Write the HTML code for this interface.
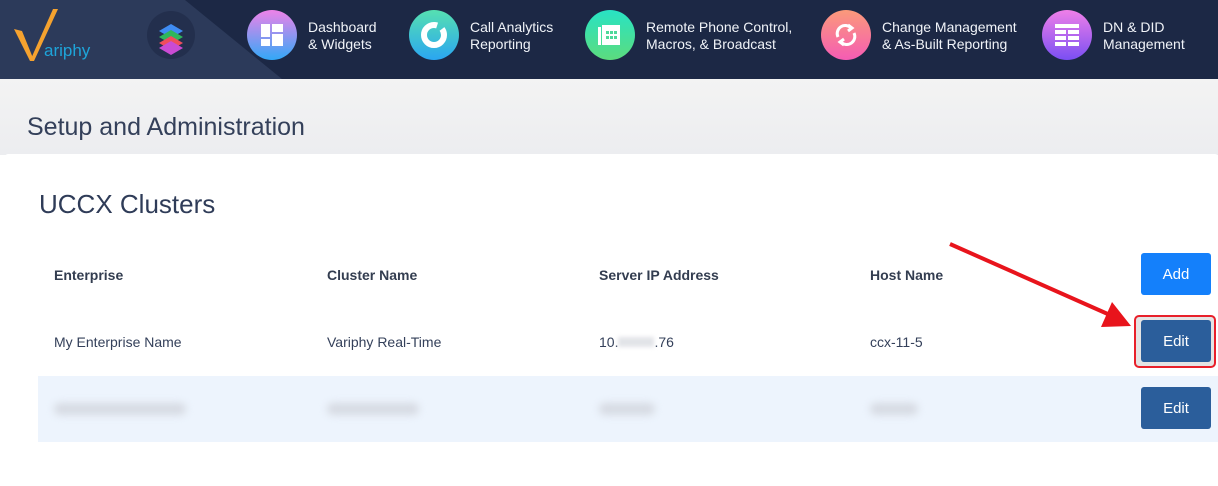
<!DOCTYPE html>
<html><head><style>
*{margin:0;padding:0;box-sizing:border-box}
body{width:1218px;height:486px;overflow:hidden;background:#fff;font-family:"Liberation Sans",sans-serif;position:relative}
.hdr{position:absolute;left:0;top:0;width:1218px;height:79px;background:#1c2845}
.nav{position:absolute;top:10px;display:flex;align-items:center;color:#f0f3f8;font-size:14px;line-height:17px}
.ic{width:50px;height:50px;border-radius:50%;margin-right:11px;display:flex;align-items:center;justify-content:center}
.gray{position:absolute;left:0;top:79px;width:1218px;height:76px;background:linear-gradient(#f3f3f3,#ecedf0)}
.card{position:absolute;left:5px;top:154px;width:1213px;height:332px;background:#fff;border-radius:3px}
.t{position:absolute;color:#34405a;font-size:14px}
.th{font-weight:bold;color:#333d50}
.btn{position:absolute;left:1141px;width:70px;height:42px;border-radius:3px;color:#fff;font-size:15px;display:flex;align-items:center;justify-content:center}
.blur{position:absolute;height:12px;background:#d6dae2;filter:blur(4px);border-radius:6px}
</style></head><body>
<div class="hdr">
<svg width="1218" height="79" style="position:absolute;left:0;top:0">
<polygon points="0,0 185,0 282,79 0,79" fill="#2c3a5a"/>
<polygon points="14,29 22,31 33,58 30,61" fill="#f5a22f"/><polygon points="30,61 53,9 58,9 34,61" fill="#f5a22f"/>
<text x="44" y="56" fill="#1ea4d9" font-size="17" font-family="Liberation Sans Narrow, Liberation Sans" transform="scale(1,1)" letter-spacing="0">ariphy</text>
<circle cx="171" cy="35" r="24" fill="#232f4d"/>
<polygon points="171,24 183,31 171,38 159,31" fill="#3f8cf3"/>
<polygon points="171,30 183,37 171,44 159,37" fill="#2fb75b"/>
<polygon points="171,36 183,43 171,50 159,43" fill="#ef4d5c"/>
<polygon points="171,41 183,48 171,55 159,48" fill="#c94bd4"/>
</svg>
<div class="nav" style="left:247px"><div class="ic" style="background:linear-gradient(#ee82e8,#32a8f7)"><svg width="22" height="22"><rect x="0" y="0" width="9" height="13" fill="#fff"/><rect x="11" y="0" width="11" height="8" fill="#fff"/><rect x="11" y="10" width="11" height="12" fill="#fff"/><rect x="0" y="15" width="9" height="7" fill="#fff"/></svg></div><div style="margin-top:2px">Dashboard<br>&amp; Widgets</div></div>
<div class="nav" style="left:409px"><div class="ic" style="background:linear-gradient(#56e0b1,#2aa6f1)"><svg width="30" height="30"><circle cx="15" cy="15" r="10" fill="none" stroke="#fff" stroke-width="6" stroke-dasharray="50 6"/></svg></div><div style="margin-top:2px">Call Analytics<br>Reporting</div></div>
<div class="nav" style="left:585px"><div class="ic" style="background:linear-gradient(#28e3c4,#5cdc7e)"><svg width="24" height="24"><rect x="4" y="2" width="18" height="20" fill="#fff"/><rect x="0" y="4" width="3" height="18" fill="#fff"/><g fill="#4fd89a"><rect x="8" y="8" width="3" height="3"/><rect x="12" y="8" width="3" height="3"/><rect x="16" y="8" width="3" height="3"/><rect x="8" y="13" width="3" height="3"/><rect x="12" y="13" width="3" height="3"/><rect x="16" y="13" width="3" height="3"/></g></svg></div><div style="margin-top:2px">Remote Phone Control,<br>Macros, &amp; Broadcast</div></div>
<div class="nav" style="left:821px"><div class="ic" style="background:linear-gradient(#fb9a7a,#f55cb4)"><svg width="26" height="26" fill="none" stroke="#fff" stroke-width="3"><path d="M5 15 A8 8 0 0 1 18 6"/><path d="M21 11 A8 8 0 0 1 8 20"/><path d="M15 3 L19 6 L15 9" /><path d="M11 17 L7 20 L11 23"/></svg></div><div style="margin-top:2px">Change Management<br>&amp; As-Built Reporting</div></div>
<div class="nav" style="left:1042px"><div class="ic" style="background:linear-gradient(#ef7fe8,#7a4ff3)"><svg width="24" height="22" fill="#fff"><rect x="0" y="0" width="24" height="4"/><rect x="0" y="6" width="11" height="4"/><rect x="13" y="6" width="11" height="4"/><rect x="0" y="12" width="11" height="4"/><rect x="13" y="12" width="11" height="4"/><rect x="0" y="18" width="11" height="4"/><rect x="13" y="18" width="11" height="4"/></svg></div><div style="margin-top:2px">DN &amp; DID<br>Management</div></div>
</div>
<div class="gray"></div>
<div style="position:absolute;left:27px;top:113px;font-size:25px;color:#34405a">Setup and Administration</div>
<div class="card"></div>
<div style="position:absolute;left:39px;top:189px;font-size:26px;color:#2f3c58">UCCX Clusters</div>
<div class="t th" style="left:54px;top:267px">Enterprise</div>
<div class="t th" style="left:327px;top:267px">Cluster Name</div>
<div class="t th" style="left:599px;top:267px">Server IP Address</div>
<div class="t th" style="left:870px;top:267px">Host Name</div>
<div class="t" style="left:54px;top:334px">My Enterprise Name</div>
<div class="t" style="left:327px;top:334px">Variphy Real-Time</div>
<div class="t" style="left:599px;top:334px">10.<span style="display:inline-block;width:36px;height:10px;background:#e2e4e8;filter:blur(2px)"></span>.76</div>
<div class="t" style="left:870px;top:334px">ccx-11-5</div>
<div style="position:absolute;left:38px;top:376px;width:1180px;height:66px;background:#edf4fd"></div>
<div class="blur" style="left:54px;top:403px;width:132px"></div>
<div class="blur" style="left:327px;top:403px;width:92px"></div>
<div class="blur" style="left:599px;top:403px;width:56px"></div>
<div class="blur" style="left:870px;top:403px;width:48px"></div>
<div class="btn" style="top:253px;background:#1480fb">Add</div>
<div style="position:absolute;left:1134px;top:315px;width:82px;height:53px;border:2px solid #e8202a;border-radius:5px;background:#e4e4e4"></div>
<div class="btn" style="top:320px;background:#2b5e9b">Edit</div>
<div class="btn" style="top:387px;background:#2b5e9b">Edit</div>
<svg width="1218" height="486" style="position:absolute;left:0;top:0">
<line x1="950" y1="244" x2="1110" y2="315" stroke="#e8141c" stroke-width="4"/>
<polygon points="1131,326 1101,327 1112,302" fill="#e8141c"/>
</svg>
</body></html>
